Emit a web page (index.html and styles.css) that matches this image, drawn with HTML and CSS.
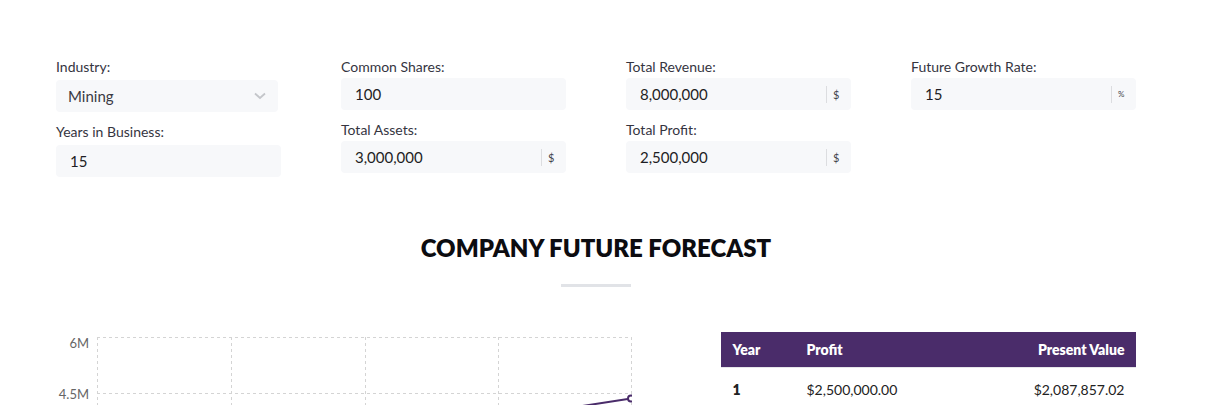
FILE: index.html
```html
<!DOCTYPE html>
<html lang="en">
<head>
  <meta charset="UTF-8">
  <title>Company Valuation</title>
  <link rel="stylesheet" href="styles.css">
</head>
<body>
  <div class="page">

    <div class="form">
      <div class="col col-first">
        <div class="field">
          <label>Industry:</label>
          <div class="select">
            <span>Mining</span>
            <svg class="chevron" width="12" height="8" viewBox="0 0 12 8"><path d="M1 1.5 L6 6 L11 1.5" fill="none" stroke="#c4c6ca" stroke-width="1.8"/></svg>
          </div>
        </div>
        <div class="field">
          <label>Years in Business:</label>
          <div class="input wide"><span>15</span></div>
        </div>
      </div>

      <div class="col">
        <div class="field">
          <label>Common Shares:</label>
          <div class="input"><span>100</span></div>
        </div>
        <div class="field">
          <label>Total Assets:</label>
          <div class="input"><span>3,000,000</span><em class="unit">$</em></div>
        </div>
      </div>

      <div class="col">
        <div class="field">
          <label>Total Revenue:</label>
          <div class="input"><span>8,000,000</span><em class="unit">$</em></div>
        </div>
        <div class="field">
          <label>Total Profit:</label>
          <div class="input"><span>2,500,000</span><em class="unit">$</em></div>
        </div>
      </div>

      <div class="col">
        <div class="field">
          <label>Future Growth Rate:</label>
          <div class="input"><span>15</span><em class="unit small">%</em></div>
        </div>
      </div>
    </div>

    <h2 class="title">COMPANY FUTURE FORECAST</h2>
    <div class="divider"></div>

    <div class="forecast">
      <div class="chart">
        <svg width="575" height="140" viewBox="0 0 575 140">
          <g stroke="#d4d4d4" stroke-dasharray="3 3" fill="none">
            <line x1="40" y1="7.5" x2="575" y2="7.5"/>
            <line x1="40" y1="63.5" x2="575" y2="63.5"/>
            <line x1="40" y1="119.5" x2="575" y2="119.5"/>
            <line x1="40.5" y1="7" x2="40.5" y2="140"/>
            <line x1="174.5" y1="7" x2="174.5" y2="140"/>
            <line x1="308.5" y1="7" x2="308.5" y2="140"/>
            <line x1="441.5" y1="7" x2="441.5" y2="140"/>
            <line x1="574.5" y1="7" x2="574.5" y2="140"/>
          </g>
          <g class="axis">
            <text x="32" y="18" text-anchor="end">6M</text>
            <text x="32" y="69" text-anchor="end">4.5M</text>
          </g>
          <polyline points="40,137.7 174,123.7 308,107.6 441,89 574,68.5" fill="none" stroke="#4a2c6a" stroke-width="2"/>
          <g fill="#fff" stroke="#4a2c6a" stroke-width="2">
            <circle cx="441" cy="89" r="3"/>
            <circle cx="574" cy="68.5" r="3"/>
          </g>
        </svg>
      </div>

      <table class="table">
        <thead>
          <tr>
            <th>Year</th>
            <th>Profit</th>
            <th class="right">Present Value</th>
          </tr>
        </thead>
        <tbody>
          <tr>
            <td class="year">1</td>
            <td>$2,500,000.00</td>
            <td class="right">$2,087,857.02</td>
          </tr>
        </tbody>
      </table>
    </div>

  </div>
</body>
</html>
```

FILE: styles.css
```css
* {
  box-sizing: border-box;
  margin: 0;
  padding: 0;
}

body {
  font-family: Lato, "Open Sans", sans-serif;
  color: #2a2a33;
  background: #fff;
  overflow: hidden;
}

.page {
  width: 1192px;
  padding-top: 57px;
}

.form {
  width: 1080px;
  margin: 0 auto;
  display: grid;
  grid-template-columns: repeat(4, 225px);
  column-gap: 60px;
}

.col {
  display: flex;
  flex-direction: column;
  gap: 10px;
}

.field label {
  display: block;
  font-size: 14px;
  line-height: 20px;
  color: #35353f;
  margin-bottom: 1px;
}

.col-first label {
  margin-bottom: 3px;
}

.select,
.input {
  height: 32px;
  background: #f7f8fa;
  border-radius: 4px;
  display: flex;
  align-items: center;
  padding: 0 14px;
  font-size: 15px;
  color: #1e1e24;
}

.select {
  width: 222px;
  padding: 0 12px;
  justify-content: space-between;
  color: #3a3a44;
}

.input span {
  flex: 1;
}

.input .unit {
  font-style: normal;
  font-size: 11px;
  color: #44444c;
  border-left: 1px solid #dcdde0;
  height: 17px;
  line-height: 17px;
  padding-left: 6px;
  margin-right: -4px;
  width: 15px;
}

.input .unit.small {
  font-size: 8px;
}

.title {
  text-align: center;
  font-size: 24px;
  font-weight: 800;
  color: #0c0c10;
  margin-top: 56px;
  line-height: 30px;
}

.divider {
  width: 70px;
  height: 3px;
  background: #e1e3e7;
  margin: 21px auto 0;
}

.forecast {
  width: 1079px;
  margin: 45px auto 0;
  display: flex;
  justify-content: space-between;
  align-items: flex-start;
}

.chart {
  width: 575px;
  margin-top: -2px;
}

.chart svg {
  display: block;
}

.axis text {
  font-family: Lato, sans-serif;
  font-size: 13px;
  fill: #666;
}

.table {
  width: 415px;
  border-collapse: collapse;
  font-size: 14px;
}

.table th {
  background: #4a2c6a;
  color: #fff;
  font-weight: 800;
  text-align: left;
  height: 35px;
  padding: 0 12px;
  border-bottom: 1px solid #e6e6ea;
}

.table th:nth-child(2),
.table td:nth-child(2) {
  padding-left: 0;
}

.table th:first-child,
.table td:first-child {
  width: 86px;
}

.table td {
  padding: 0 12px;
  height: 44px;
  color: #222;
}

.table .right {
  text-align: right;
  padding-right: 11px;
}

.table .year {
  font-weight: 800;
}
```
